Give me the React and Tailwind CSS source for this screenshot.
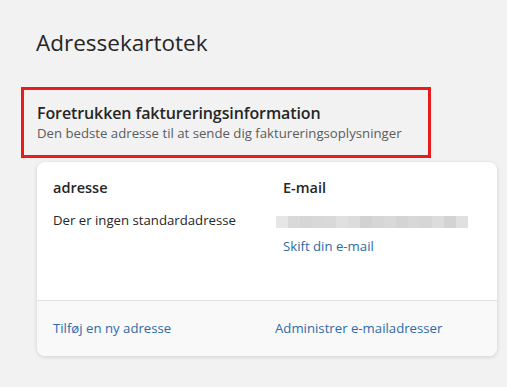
import React from "react";

const BLUR_BLOCKS = [
  "#e6e6e6", "#d9d9d9", "#d6d6d6", "#d8d8d8", "#d9d9d9", "#e0e0e0", "#dcdcdc",
  "#d2d2d2", "#d6d6d6", "#d9d9d9", "#d4d4d4", "#d8d8d8", "#d6d6d6", "#dcdcdc",
  "#d3d3d3", "#e0e0e0",
];

function App() {
  return (
    <div
      className="min-h-[387px] w-[507px] bg-[#f2f2f2] text-[#262626]"
      style={{ fontFamily: '"Open Sans", "Noto Sans", sans-serif' }}
    >
      <div className="pt-[27px] pl-[36px]">
        <h1 className="text-[22.5px] leading-[32px] font-normal text-[#262626]">Adressekartotek</h1>
      </div>

      {/* Highlighted section header */}
      <div className="ml-[21px] mt-[28px] w-[410px] h-[71px] border-[3px] border-[#e81c1c] pl-[13px] pt-[12px]">
        <h2 className="text-[16px] leading-[22px] font-semibold text-[#262626] tracking-[-0.1px]">
          Foretrukken faktureringsinformation
        </h2>
        <p className="text-[13.2px] leading-[19px] text-[#5c5c5c]">
          Den bedste adresse til at sende dig faktureringsoplysninger
        </p>
      </div>

      {/* Card */}
      <div className="ml-[37px] mt-[4px] w-[460px] rounded-lg bg-white shadow-[0_1px_4px_rgba(0,0,0,0.14)] overflow-hidden">
        <div className="h-[138px] flex pt-[15px]">
          <div className="w-[230px] pl-[16px]">
            <div className="text-[14.5px] leading-[22px] font-semibold text-[#262626]">adresse</div>
            <div className="mt-[12px] text-[13.2px] leading-[18px] text-[#262626]">
              Der er ingen standardadresse
            </div>
          </div>
          <div className="flex-1">
            <div className="pl-[16px] text-[14.5px] leading-[22px] font-semibold text-[#262626]">E-mail</div>
            <div className="mt-[17px] ml-[9px] flex h-[12px]">
              {BLUR_BLOCKS.map((c, i) => (
                <div key={i} className="w-[12px] h-[12px]" style={{ backgroundColor: c }} />
              ))}
            </div>
            <a className="block pl-[16px] mt-[9px] text-[13.2px] leading-[18px] text-[#2f6aa6]">
              Skift din e-mail
            </a>
          </div>
        </div>
        <div className="h-[56px] border-t border-[#e0e0e0] bg-[#f9f9fa] flex items-center">
          <a className="w-[238px] pl-[16px] text-[13.2px] text-[#2f6aa6]">Tilføj en ny adresse</a>
          <a className="text-[13.2px] text-[#2f6aa6]">Administrer e-mailadresser</a>
        </div>
      </div>
    </div>
  );
}

export default App;
